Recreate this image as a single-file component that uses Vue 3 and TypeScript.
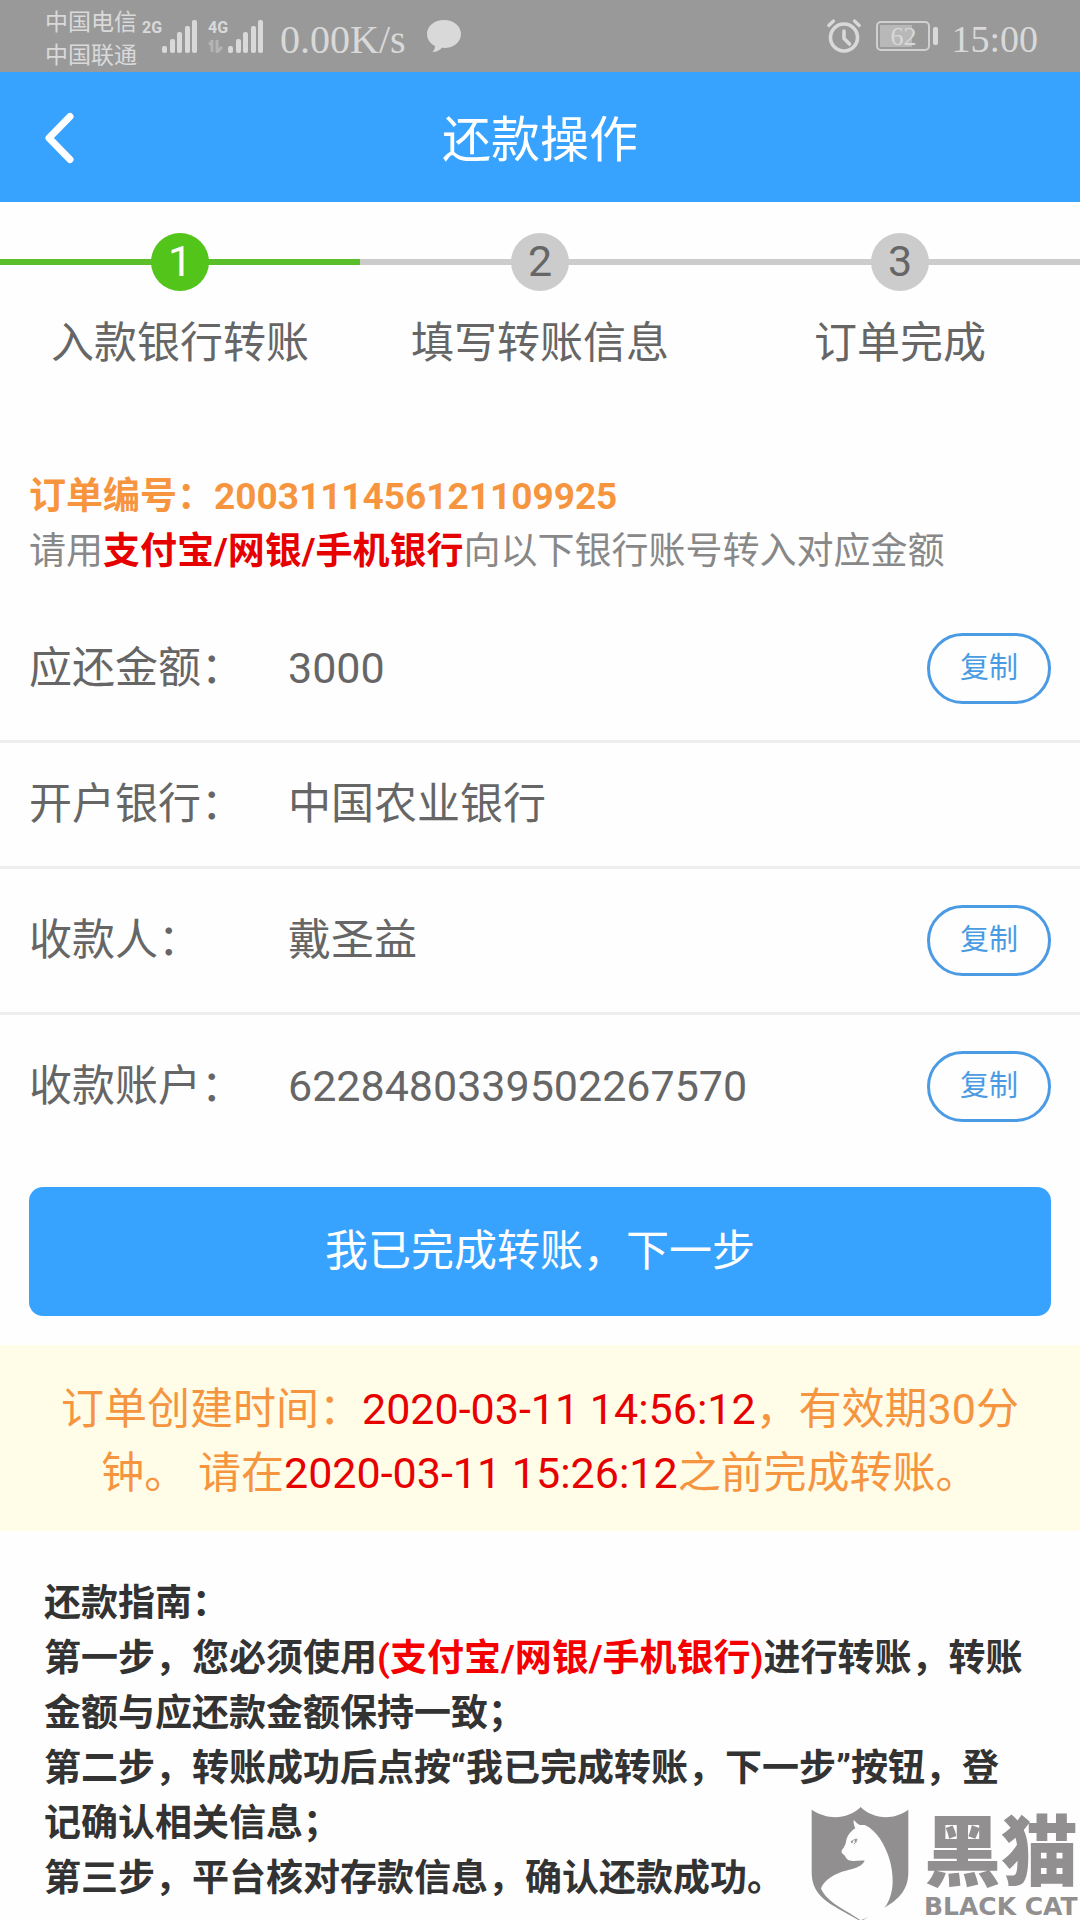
<script setup lang="ts">
import { ref } from 'vue'

interface Step {
  no: number
  label: string
}

interface Field {
  key: string
  label: string
  value: string
  copyable: boolean
}

const currentStep = ref(1)

const steps: Step[] = [
  { no: 1, label: '入款银行转账' },
  { no: 2, label: '填写转账信息' },
  { no: 3, label: '订单完成' },
]

const orderNo = '2003111456121109925'

const fields: Field[] = [
  { key: 'amount', label: '应还金额：', value: '3000', copyable: true },
  { key: 'bank', label: '开户银行：', value: '中国农业银行', copyable: false },
  { key: 'payee', label: '收款人：', value: '戴圣益', copyable: true },
  { key: 'account', label: '收款账户：', value: '6228480339502267570', copyable: true },
]

const signalBars = [
  { x: 0, y: 26, h: 7 },
  { x: 8, y: 19, h: 14 },
  { x: 15, y: 12, h: 21 },
  { x: 23, y: 6, h: 27 },
  { x: 30, y: 0, h: 33 },
]

function copy(text: string) {
  navigator.clipboard?.writeText(text)
}

function nextStep() {
  if (currentStep.value < steps.length) currentStep.value += 1
}
</script>

<template>
  <div class="page">
    <div class="status">
      <div class="carriers">
        <span>中国电信</span>
        <span>中国联通</span>
      </div>
      <div class="signal">
        <span class="net">2G</span>
        <svg class="bars" width="35" height="33" viewBox="0 0 35 33" aria-hidden="true">
          <rect v-for="b in signalBars" :key="b.x" :x="b.x" :y="b.y" width="5" :height="b.h" rx="2" />
        </svg>
      </div>
      <div class="signal second">
        <span class="net">
          4G
          <svg class="arrows" width="16" height="13" viewBox="0 0 16 13" aria-hidden="true">
            <path d="M4 0v12M1 4.500L4.500 1M9 1v11L14 7M9 0v3" />
          </svg>
        </span>
        <svg class="bars" width="35" height="33" viewBox="0 0 35 33" aria-hidden="true">
          <rect v-for="b in signalBars" :key="b.x" :x="b.x" :y="b.y" width="5" :height="b.h" rx="2" />
        </svg>
      </div>
      <span class="speed">0.00K/s</span>
      <svg class="bubble" width="34" height="34" viewBox="0 0 34 34" aria-hidden="true">
        <path d="M17 1C7.500 1 0 7 0 15c0 5 3 9.500 8 12 0 2.500-1 4.500-2.500 6 4 0 7.500-1.500 9.500-4.200 10.500 1 19-5 19-13.800C34 7 26.500 1 17 1z" />
      </svg>
      <div class="status-right">
        <svg width="34" height="34" viewBox="0 0 34 34" aria-hidden="true">
          <g fill="none" stroke="#d9d9d9" stroke-linecap="round" stroke-linejoin="round">
            <circle cx="17" cy="18.500" r="13.500" stroke-width="3.600" />
            <path d="M17 12v7.500l5.500 5.500" stroke-width="3.600" />
            <path d="M1.800 6.500L6.500 2M32.200 6.500L27.500 2" stroke-width="3.200" />
          </g>
        </svg>
        <div class="battery">
          <div class="battery-shell">62</div>
          <div class="battery-cap"></div>
        </div>
        <span class="clock">15:00</span>
      </div>
    </div>

    <header class="bar">
      <button class="back" type="button" aria-label="返回">
        <svg width="32" height="52" viewBox="0 0 32 52" aria-hidden="true">
          <path d="M26 4.500L5 26l21 21.500" fill="none" stroke="#fff" stroke-width="7" stroke-linecap="round" stroke-linejoin="round" />
        </svg>
      </button>
      <h1>还款操作</h1>
      <span class="bar-side"></span>
    </header>

    <main>
      <ol class="steps">
        <li v-for="s in steps" :key="s.no" :class="{ active: s.no <= currentStep }">
          <div class="track"><span class="dot">{{ s.no }}</span></div>
          <span class="step-label">{{ s.label }}</span>
        </li>
      </ol>

      <section class="order">
        <p class="order-no">订单编号：{{ orderNo }}</p>
        <p class="hint">请用<strong>支付宝/网银/手机银行</strong>向以下银行账号转入对应金额</p>
      </section>

      <dl class="fields">
        <div v-for="f in fields" :key="f.key" class="row">
          <dt>{{ f.label }}</dt>
          <dd>{{ f.value }}</dd>
          <button v-if="f.copyable" class="copy" type="button" @click="copy(f.value)">复制</button>
        </div>
      </dl>

      <div class="action">
        <button class="primary" type="button" @click="nextStep">我已完成转账，下一步</button>
      </div>

      <p class="notice">订单创建时间：<em>2020-03-11 14:56:12</em>，有效期30分钟。 请在<em>2020-03-11 15:26:12</em>之前完成转账。</p>

      <section class="guide">
        <p>还款指南：</p>
        <p>第一步，您必须使用<em>(支付宝/网银/手机银行)</em>进行转账，转账金额与应还款金额保持一致；</p>
        <p>第二步，转账成功后点按“我已完成转账，下一步”按钮，登记确认相关信息；</p>
        <p>第三步，平台核对存款信息，确认还款成功。</p>
      </section>
    </main>

    <div class="brand">
      <svg width="98" height="116" viewBox="0 0 294 348" aria-hidden="true">
        <path fill="#918f90" d="M2 11C50 43 110 41 149 3c39 38 99 40 143 8v188c0 60-38 86-77 110-28 16-50 28-66 37-16-10-40-22-66-37C40 284 2 259 2 199z" />
        <path fill="#fefefe" d="M128 42c6 5 10 12 19 15 4 1 10-1 16 1 17 8 31 22 43 39 26 40 39 84 39 127 0 36-11 67-31 90-22 14-44 20-65 29-21-16-47-28-70-44-24-17-39-30-49-51 5-16 20-30 40-41 37-20 77-15 91-43-14-1-35 4-49-2-8-4-9-13-15-17-7-4-6-12-2-16 5-6 8-13 10-22 3-17 14-32 28-40-4-8-6-17-5-25z" />
        <path fill="none" stroke="#918f90" stroke-width="2.500" d="M121 110c3-7 9-10 17-11-1 8-4 13-10 15" />
        <path fill="#918f90" d="M120 105l5-2v9l-4-1zM133 99l4 2-4 9-3-3z" />
      </svg>
      <div class="brand-text">
        <span class="brand-cn">黑猫</span>
        <span class="brand-en">BLACK CAT</span>
      </div>
    </div>
  </div>
</template>

<style>
body {
  margin: 0;
  background: #fefefe;
}
</style>

<style scoped>
.page {
  position: relative;
  min-height: 100vh;
  overflow: hidden;
  background: #fefefe;
  color: #666;
  font-family: Roboto, "Noto Sans CJK SC", sans-serif;
  font-size: 43px;
  line-height: 51px;
}

p,
h1,
ol,
dl,
dd {
  margin: 0;
  padding: 0;
}

em {
  font-style: normal;
}

button {
  padding: 0;
  font-family: inherit;
  line-height: inherit;
  cursor: pointer;
}

svg {
  display: block;
}

/* system status bar */
.status {
  display: flex;
  align-items: center;
  height: 72px;
  padding: 0 42px 0 45px;
  background: #999;
  color: #d9d9d9;
  white-space: nowrap;
}

.carriers {
  display: flex;
  flex-direction: column;
  margin-top: 6px;
  font-size: 23px;
  line-height: 33px;
}

.signal {
  display: flex;
  height: 33px;
  margin-left: 5px;
}

.signal.second {
  margin-left: 11px;
}

.net {
  width: 20px;
  font-size: 16px;
  font-weight: 700;
  line-height: 16px;
}

.arrows {
  margin-top: 4px;
  fill: none;
  stroke: #b4b4b4;
  stroke-width: 3;
}

.bars,
.bubble {
  fill: #d9d9d9;
}

.speed,
.clock {
  padding-top: 6px;
  font-family: "Liberation Serif", serif;
  font-size: 38px;
}

.speed {
  width: 130px;
  margin-left: 17px;
  font-size: 40px;
}

.bubble {
  margin-left: 17px;
}

.status-right {
  display: flex;
  align-items: center;
  margin-left: auto;
}

.battery {
  display: flex;
  align-items: center;
  gap: 3px;
  margin: 0 13px 0 15px;
}

.battery-shell {
  box-sizing: border-box;
  width: 54px;
  height: 30px;
  border: 2px solid #d0d0d0;
  border-radius: 5px;
  background: linear-gradient(#b8b8b8, #b8b8b8) 2px 2px / 32px 22px no-repeat;
  font-family: "Liberation Serif", serif;
  font-size: 26px;
  line-height: 28px;
  text-align: center;
}

.battery-cap {
  width: 5px;
  height: 18px;
  border-radius: 2px;
  background: #d9d9d9;
}

/* title bar */
.bar {
  box-sizing: border-box;
  display: flex;
  align-items: center;
  justify-content: space-between;
  height: 130px;
  padding: 2px 44px 0;
  background: #38a3ff;
  color: #fff;
}

.back,
.bar-side {
  width: 32px;
}

.back {
  border: 0;
  background: none;
}

.bar h1 {
  padding-top: 5px;
  font-size: 49px;
  font-weight: 400;
}

/* progress */
.steps {
  display: flex;
  padding-top: 31px;
  list-style: none;
}

.steps li {
  flex: 1;
  text-align: center;
}

.track {
  display: flex;
  justify-content: center;
  background: linear-gradient(#ccc, #ccc) center / 100% 6px no-repeat;
}

.active .track {
  background-image: linear-gradient(#5abf29, #5abf29);
}

.dot {
  width: 58px;
  height: 58px;
  border-radius: 50%;
  background: #ccc;
  line-height: 56px;
}

.active .dot {
  background: #52c41a;
  color: #fff;
}

.step-label {
  display: block;
  margin-top: 27px;
}

/* order summary */
.order {
  padding: 100px 29px 18px;
  font-size: 37px;
  line-height: 55px;
}

.order-no {
  color: #f7953f;
  font-weight: 700;
}

.hint {
  color: #888;
}

.hint strong {
  color: #e60000;
}

.row {
  display: flex;
  align-items: center;
  padding: 36px 29px;
  border-bottom: 3px solid #eee;
}

.row:last-child {
  border-bottom: 0;
}

.row dt {
  width: 259px;
}

.row dd {
  flex: 1;
}

.copy {
  box-sizing: border-box;
  width: 124px;
  height: 71px;
  border: 3px solid #4a9be3;
  border-radius: 36px;
  background: none;
  color: #4a9be3;
  font-size: 29px;
}

.action {
  padding: 29px;
}

.primary {
  display: block;
  width: 100%;
  height: 129px;
  border: 0;
  border-radius: 14px;
  background: #38a3ff;
  color: #fff;
  font-size: 43px;
}

.notice {
  padding: 32px 43px 26px;
  background: #fffce8;
  color: #f5953f;
  line-height: 64px;
  text-align: center;
}

.notice em {
  color: #e60000;
}

.guide {
  padding: 45px 50px 16px 44px;
  color: #333;
  font-size: 37px;
  font-weight: 700;
  line-height: 55px;
}

.guide em {
  color: #f50000;
}

/* watermark over the lower right corner */
.brand {
  position: absolute;
  right: 0;
  bottom: 0;
  display: flex;
  align-items: flex-end;
  gap: 15px;
  color: #918f90;
  white-space: nowrap;
}

.brand-text {
  display: flex;
  flex-direction: column;
  gap: 7px;
  width: 156px;
}

.brand-cn {
  font-family: "Noto Sans CJK SC", sans-serif;
  font-size: 77px;
  font-weight: 900;
  line-height: 76px;
}

.brand-en {
  font-family: "DejaVu Sans", sans-serif;
  font-size: 25px;
  font-weight: 700;
  line-height: 30px;
}
</style>
